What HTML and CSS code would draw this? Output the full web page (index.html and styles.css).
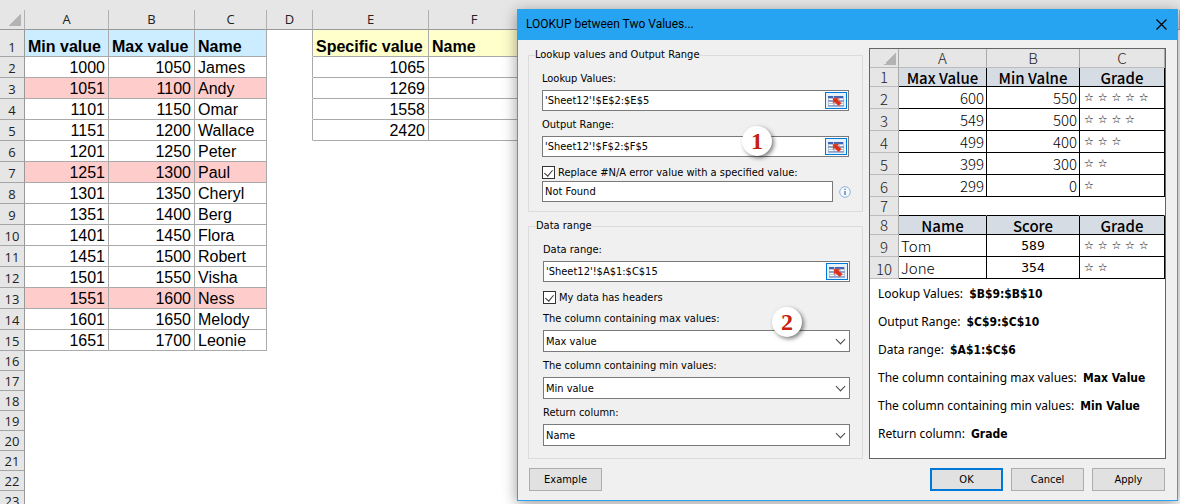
FILE: index.html
```
<!DOCTYPE html>
<html lang="en">
<head>
  <meta charset="UTF-8" />
  <meta name="viewport" content="width=device-width, initial-scale=1.0" />
  <title>LOOKUP between Two Values</title>
  <link rel="stylesheet" href="styles.css">
</head>
<body>
  <div class="sheet">
    <table class="grid">
      <colgroup>
        <col class="col-row"><col class="col-a"><col class="col-b"><col class="col-c"><col class="col-d"><col class="col-e"><col class="col-f"><col>
      </colgroup>
      <thead>
        <tr><th class="corner"></th><th>A</th><th>B</th><th>C</th><th>D</th><th>E</th><th>F</th><th></th></tr>
      </thead>
      <tbody>
        <tr class="titles"><th>1</th><td class="blue">Min value</td><td class="blue">Max value</td><td class="blue">Name</td><td class="gap"></td><td class="yellow">Specific value</td><td class="yellow">Name</td></tr>
        <tr><th>2</th><td class="num">1000</td><td class="num">1050</td><td>James</td><td class="gap"></td><td class="num">1065</td><td></td></tr>
        <tr class="pink"><th>3</th><td class="num">1051</td><td class="num">1100</td><td>Andy</td><td class="gap"></td><td class="num plain">1269</td><td class="plain"></td></tr>
        <tr><th>4</th><td class="num">1101</td><td class="num">1150</td><td>Omar</td><td class="gap"></td><td class="num">1558</td><td></td></tr>
        <tr><th>5</th><td class="num">1151</td><td class="num">1200</td><td>Wallace</td><td class="gap"></td><td class="num">2420</td><td></td></tr>
        <tr><th>6</th><td class="num">1201</td><td class="num">1250</td><td>Peter</td></tr>
        <tr class="pink"><th>7</th><td class="num">1251</td><td class="num">1300</td><td>Paul</td></tr>
        <tr><th>8</th><td class="num">1301</td><td class="num">1350</td><td>Cheryl</td></tr>
        <tr><th>9</th><td class="num">1351</td><td class="num">1400</td><td>Berg</td></tr>
        <tr><th>10</th><td class="num">1401</td><td class="num">1450</td><td>Flora</td></tr>
        <tr><th>11</th><td class="num">1451</td><td class="num">1500</td><td>Robert</td></tr>
        <tr><th>12</th><td class="num">1501</td><td class="num">1550</td><td>Visha</td></tr>
        <tr class="pink"><th>13</th><td class="num">1551</td><td class="num">1600</td><td>Ness</td></tr>
        <tr><th>14</th><td class="num">1601</td><td class="num">1650</td><td>Melody</td></tr>
        <tr><th>15</th><td class="num">1651</td><td class="num">1700</td><td>Leonie</td></tr>
        <tr class="empty"><th>16</th></tr>
        <tr class="empty"><th>17</th></tr>
        <tr class="empty"><th>18</th></tr>
        <tr class="empty"><th>19</th></tr>
        <tr class="empty"><th>20</th></tr>
        <tr class="empty"><th>21</th></tr>
        <tr class="empty"><th>22</th></tr>
        <tr class="empty"><th>23</th></tr>
      </tbody>
    </table>
  </div>

  <!-- icon for the range picker buttons -->
  <svg class="defs" aria-hidden="true">
    <symbol id="pick" viewBox="0 0 16 12">
      <rect x="0" y="1" width="16" height="10" fill="#b9c6dc" />
      <path d="M0 1h5v2H0zM6 1h9v2H6z" fill="#3f66b5" />
      <path d="M1 4h4v1H1zM1 7h4v1H1zM1 9h4v1H1zM7 9h3v1H7zM12 4h3v1h-3zM12 7h3v1h-3zM12 9h3v1h-3z" fill="#fff" />
      <path d="M0 6h5M11 6h5M0 11h16" stroke="#5f7fb8" stroke-width="1" fill="none" />
      <path d="M5 3l6 0-1.500 1.500 4 3.500-3 3-4-4L5 8.500z" fill="#d8321c" stroke="#e8705c" stroke-width=".5" />
    </symbol>
  </svg>

  <div class="dialog" role="dialog" aria-labelledby="dialog-title">
    <div class="titlebar">
      <span id="dialog-title">LOOKUP between Two Values...</span>
      <button class="close" type="button" aria-label="Close">
        <svg width="11" height="11" viewBox="0 0 11 11"><path d="M.5.5l10 10M10.500.5l-10 10" stroke="#000" stroke-width="1.200" /></svg>
      </button>
    </div>

    <form class="content">
      <div class="panels">
        <div class="settings">
          <fieldset>
            <legend>Lookup values and Output Range</legend>
            <label for="lookup">Lookup Values:</label>
            <div class="range">
              <input id="lookup" type="text" value="'Sheet12'!$E$2:$E$5">
              <button type="button" aria-label="Select range"><svg width="16" height="12"><use href="#pick" /></svg></button>
            </div>
            <label for="output">Output Range:</label>
            <div class="range">
              <input id="output" type="text" value="'Sheet12'!$F$2:$F$5">
              <button type="button" aria-label="Select range"><svg width="16" height="12"><use href="#pick" /></svg></button>
            </div>
            <div class="check">
              <input id="replace" type="checkbox" checked>
              <label for="replace">Replace #N/A error value with a specified value:</label>
            </div>
            <div class="error-value">
              <input type="text" value="Not Found" aria-label="Error value">
              <svg width="12" height="12" viewBox="0 0 12 12">
                <circle cx="6" cy="6" r="5.300" fill="#f4f8fd" stroke="#8db2dd" />
                <path d="M6 5v4M6 2.800v1.200" stroke="#3d6ca8" stroke-width="1.200" />
              </svg>
            </div>
            <span class="badge badge-one">1</span>
          </fieldset>

          <fieldset>
            <legend>Data range</legend>
            <label for="data">Data range:</label>
            <div class="range">
              <input id="data" type="text" value="'Sheet12'!$A$1:$C$15">
              <button type="button" aria-label="Select range"><svg width="16" height="12"><use href="#pick" /></svg></button>
            </div>
            <div class="check">
              <input id="headers" type="checkbox" checked>
              <label for="headers">My data has headers</label>
            </div>
            <label for="max">The column containing max values:</label>
            <div class="select"><select id="max"><option>Max value</option></select></div>
            <label for="min">The column containing min values:</label>
            <div class="select"><select id="min"><option>Min value</option></select></div>
            <label for="return">Return column:</label>
            <div class="select"><select id="return"><option>Name</option></select></div>
            <span class="badge badge-two">2</span>
          </fieldset>
        </div>

        <div class="preview">
          <table class="sample">
            <colgroup><col class="s-row"><col class="s-a"><col class="s-b"><col></colgroup>
            <thead>
              <tr><th class="corner"></th><th>A</th><th>B</th><th>C</th></tr>
            </thead>
            <tbody>
              <tr class="head"><th>1</th><td>Max Value</td><td>Min Valne</td><td>Grade</td></tr>
              <tr><th>2</th><td>600</td><td>550</td><td class="stars">☆ ☆ ☆ ☆ ☆</td></tr>
              <tr><th>3</th><td>549</td><td>500</td><td class="stars">☆ ☆ ☆ ☆</td></tr>
              <tr><th>4</th><td>499</td><td>400</td><td class="stars">☆ ☆ ☆</td></tr>
              <tr><th>5</th><td>399</td><td>300</td><td class="stars">☆ ☆</td></tr>
              <tr><th>6</th><td>299</td><td>0</td><td class="stars">☆</td></tr>
              <tr class="blank"><th>7</th><td></td><td></td><td></td></tr>
              <tr class="head"><th>8</th><td>Name</td><td>Score</td><td>Grade</td></tr>
              <tr><th>9</th><td class="name">Tom</td><td class="score">589</td><td class="stars">☆ ☆ ☆ ☆ ☆</td></tr>
              <tr><th>10</th><td class="name">Jone</td><td class="score">354</td><td class="stars">☆ ☆</td></tr>
            </tbody>
          </table>
          <p>Lookup Values: <b>$B$9:$B$10</b></p>
          <p>Output Range: <b>$C$9:$C$10</b></p>
          <p>Data range: <b>$A$1:$C$6</b></p>
          <p>The column containing max values: <b>Max Value</b></p>
          <p>The column containing min values: <b>Min Value</b></p>
          <p>Return column: <b>Grade</b></p>
        </div>
      </div>

      <div class="actions">
        <button class="btn example" type="button">Example</button>
        <button class="btn primary" type="button">OK</button>
        <button class="btn" type="button">Cancel</button>
        <button class="btn" type="button">Apply</button>
      </div>
    </form>
  </div>
</body>
</html>
```
FILE: styles.css
```
* {
  box-sizing: border-box;
}
body {
  margin: 0;
  height: 100vh;
  overflow: hidden;
  position: relative;
  background: #fff;
  color: #000;
  font-family: "Liberation Sans", Arial, sans-serif;
}
.defs {
  position: absolute;
  width: 0;
  height: 0;
}

/* worksheet */
.sheet {
  padding-top: 10px;
  background: linear-gradient(#e6e6e6 29px, #fff 29px);
}
.grid {
  width: 100%;
  table-layout: fixed;
  border-collapse: separate;
  border-spacing: 0;
  font-size: 16px;
  line-height: 18px;
}
.col-row { width: 25px; }
.col-a { width: 84px; }
.col-b { width: 86px; }
.col-c { width: 72px; }
.col-d { width: 46px; }
.col-e { width: 116px; }
.col-f { width: 91px; }
.grid th {
  padding: 2px 0 0;
  background: #e6e6e6;
  border-right: 1px solid #999;
  border-bottom: 1px solid #a6a6a6;
  font-family: "Open Sans", sans-serif;
  font-size: 13px;
  font-weight: normal;
  color: #222;
}
.grid thead th {
  height: 20px;
  padding: 0;
  line-height: 19px;
  border-right-color: #b0b0b0;
  border-bottom-color: #999;
}
.grid td {
  height: 21px;
  padding: 2px 3px 0;
  border-right: 1px solid #aaa;
  border-bottom: 1px solid #aaa;
  white-space: nowrap;
}
.grid .titles td {
  height: 27px;
  font-weight: bold;
  vertical-align: bottom;
}
.grid .titles th {
  vertical-align: bottom;
}
.grid .num {
  text-align: right;
}
.grid .gap {
  border-bottom-color: transparent;
}
.grid .blue {
  background: #ccecff;
}
.grid .yellow {
  background: #ffffcc;
}
.grid .pink td {
  background: #ffcccc;
}
.grid .pink .gap,
.grid .pink .plain {
  background: none;
}
.grid .empty th {
  height: 20px;
  padding: 1px 0 0;
}
.grid .corner,
.sample .corner {
  background: linear-gradient(135deg, #e6e6e6 50%, #b3b3b3 50%) no-repeat 9px 4px / 12px 12px #e6e6e6;
}

/* dialog */
.dialog {
  position: absolute;
  top: 9px;
  left: 517px;
  right: 2px;
  border: 1px solid #2ba3ee;
  background: #f0f0f0;
  box-shadow: 0 3px 14px rgba(0, 0, 0, 0.4);
  font-family: "DejaVu Sans Condensed", Tahoma, sans-serif;
  font-size: 11px;
}
.titlebar {
  display: flex;
  justify-content: space-between;
  align-items: center;
  height: 30px;
  padding: 0 10px 2px 8px;
  background: #26a4f2;
  font-family: Roboto, sans-serif;
  font-size: 12px;
}
.close {
  display: flex;
  padding: 0;
  border: none;
  background: none;
}
.content {
  padding: 8px 11px 9px 10px;
}
.panels {
  display: flex;
  gap: 6px;
}
.settings {
  width: 335px;
}
fieldset {
  position: relative;
  margin: 0 0 7px;
  padding: 8px 13px 9px 13px;
  border: 1px solid #dcdcdc;
}
fieldset + fieldset {
  margin-bottom: 0;
  padding: 8px 12px 12px 14px;
}
legend {
  margin-left: -7px;
  padding: 0;
  line-height: 14px;
}
fieldset > label {
  display: block;
  margin-bottom: 2px;
  line-height: 18px;
}
input,
select,
button {
  font: inherit;
  color: inherit;
}
.range {
  display: flex;
  height: 21px;
  margin-bottom: 5px;
  padding: 1px;
  border: 1px solid #7a7a7a;
  background: #fff;
}
.range input {
  flex: 1;
  min-width: 0;
  padding: 0 1px;
  border: none;
}
.range button {
  display: flex;
  align-items: center;
  justify-content: center;
  width: 22px;
  padding: 0;
  border: 1px solid #0078d7;
  background: #e5f1fb;
}
.check {
  display: flex;
  align-items: center;
  gap: 3px;
  height: 16px;
  margin-top: 7px;
}
.check + label {
  margin-top: 5px;
}
.check input {
  appearance: none;
  position: relative;
  width: 13px;
  height: 13px;
  margin: 0;
  border: 1px solid #333;
  background: #fff;
}
.check input:checked::after {
  content: "";
  position: absolute;
  top: 1px;
  left: 3px;
  width: 4px;
  height: 7px;
  border: solid #333;
  border-width: 0 1px 1px 0;
  transform: rotate(40deg);
}
.error-value {
  display: flex;
  align-items: center;
  gap: 6px;
  margin: 1px -2px 0 0;
}
.error-value input {
  flex: 1;
  height: 21px;
  padding: 0 2px;
  border: 1px solid #7a7a7a;
}
.select {
  position: relative;
  height: 22px;
  margin-bottom: 5px;
}
.select:nth-last-child(2) {
  margin-bottom: 0;
}
.select select {
  appearance: none;
  width: 100%;
  height: 22px;
  padding: 0 2px;
  border: 1px solid #7a7a7a;
  border-radius: 0;
  background: #fff;
}
.select::after {
  content: "";
  position: absolute;
  top: 6px;
  right: 6px;
  width: 6px;
  height: 6px;
  border: solid #444;
  border-width: 0 1px 1px 0;
  transform: rotate(45deg);
}
.badge {
  position: absolute;
  width: 30px;
  height: 30px;
  border-radius: 50%;
  background: #fff;
  box-shadow: 2px 2px 4px rgba(0, 0, 0, 0.5);
  color: #c8200c;
  font-family: "Liberation Serif", serif;
  font-size: 24px;
  font-weight: bold;
  line-height: 30px;
  text-align: center;
}
.badge-one {
  top: 64px;
  right: 90px;
}
.badge-two {
  top: 74px;
  right: 60px;
}

/* example pane */
.preview {
  flex: 1;
  min-width: 0;
  border: 1px solid #646464;
  background: #fff;
}
.sample {
  width: 100%;
  margin-bottom: 1px;
  table-layout: fixed;
  border-collapse: separate;
  border-spacing: 0;
  font-family: "Noto Sans CJK SC", sans-serif;
  font-size: 15px;
  font-weight: 300;
  line-height: 18px;
}
.s-row { width: 29px; }
.s-a { width: 88px; }
.s-b { width: 93px; }
.sample th {
  height: 19px;
  padding: 0;
  background: #e6e6e6;
  border-right: 1px solid #aaa;
  border-bottom: 1px solid #bbb;
  font-weight: 300;
  color: #222;
  vertical-align: bottom;
}
.sample .corner {
  background-position: 14px 4px;
}
.sample td {
  height: 22px;
  padding: 0 2px;
  border-right: 1px solid #000;
  border-bottom: 1px solid #000;
  text-align: right;
}
.sample .head td {
  height: 19px;
  padding-top: 2px;
  background: #d6dce4;
  font-weight: 500;
  line-height: 16px;
  text-align: center;
}
.sample .blank td {
  height: 19px;
  border-right-color: transparent;
}
.sample .name {
  text-align: left;
}
.sample .score {
  font-family: "DejaVu Sans Mono", monospace;
  font-size: 13px;
  text-align: center;
}
.sample .stars {
  padding-left: 4px;
  font-family: "DejaVu Sans", sans-serif;
  font-size: 11px;
  font-weight: bold;
  text-align: left;
}
.preview p {
  margin: 0;
  padding-left: 8px;
  font-family: "Noto Sans", sans-serif;
  font-size: 12px;
  line-height: 28px;
  white-space: nowrap;
}
.preview b {
  margin-left: 3px;
  font-family: "DejaVu Sans Condensed", Tahoma, sans-serif;
}

.actions {
  display: flex;
  gap: 8px;
  margin-top: 9px;
  padding: 0 1px;
}
.btn {
  width: 73px;
  height: 23px;
  padding: 0;
  border: 1px solid #adadad;
  background: #e1e1e1;
}
.example {
  margin-right: auto;
}
.primary {
  border: 2px solid #0078d7;
}
```
